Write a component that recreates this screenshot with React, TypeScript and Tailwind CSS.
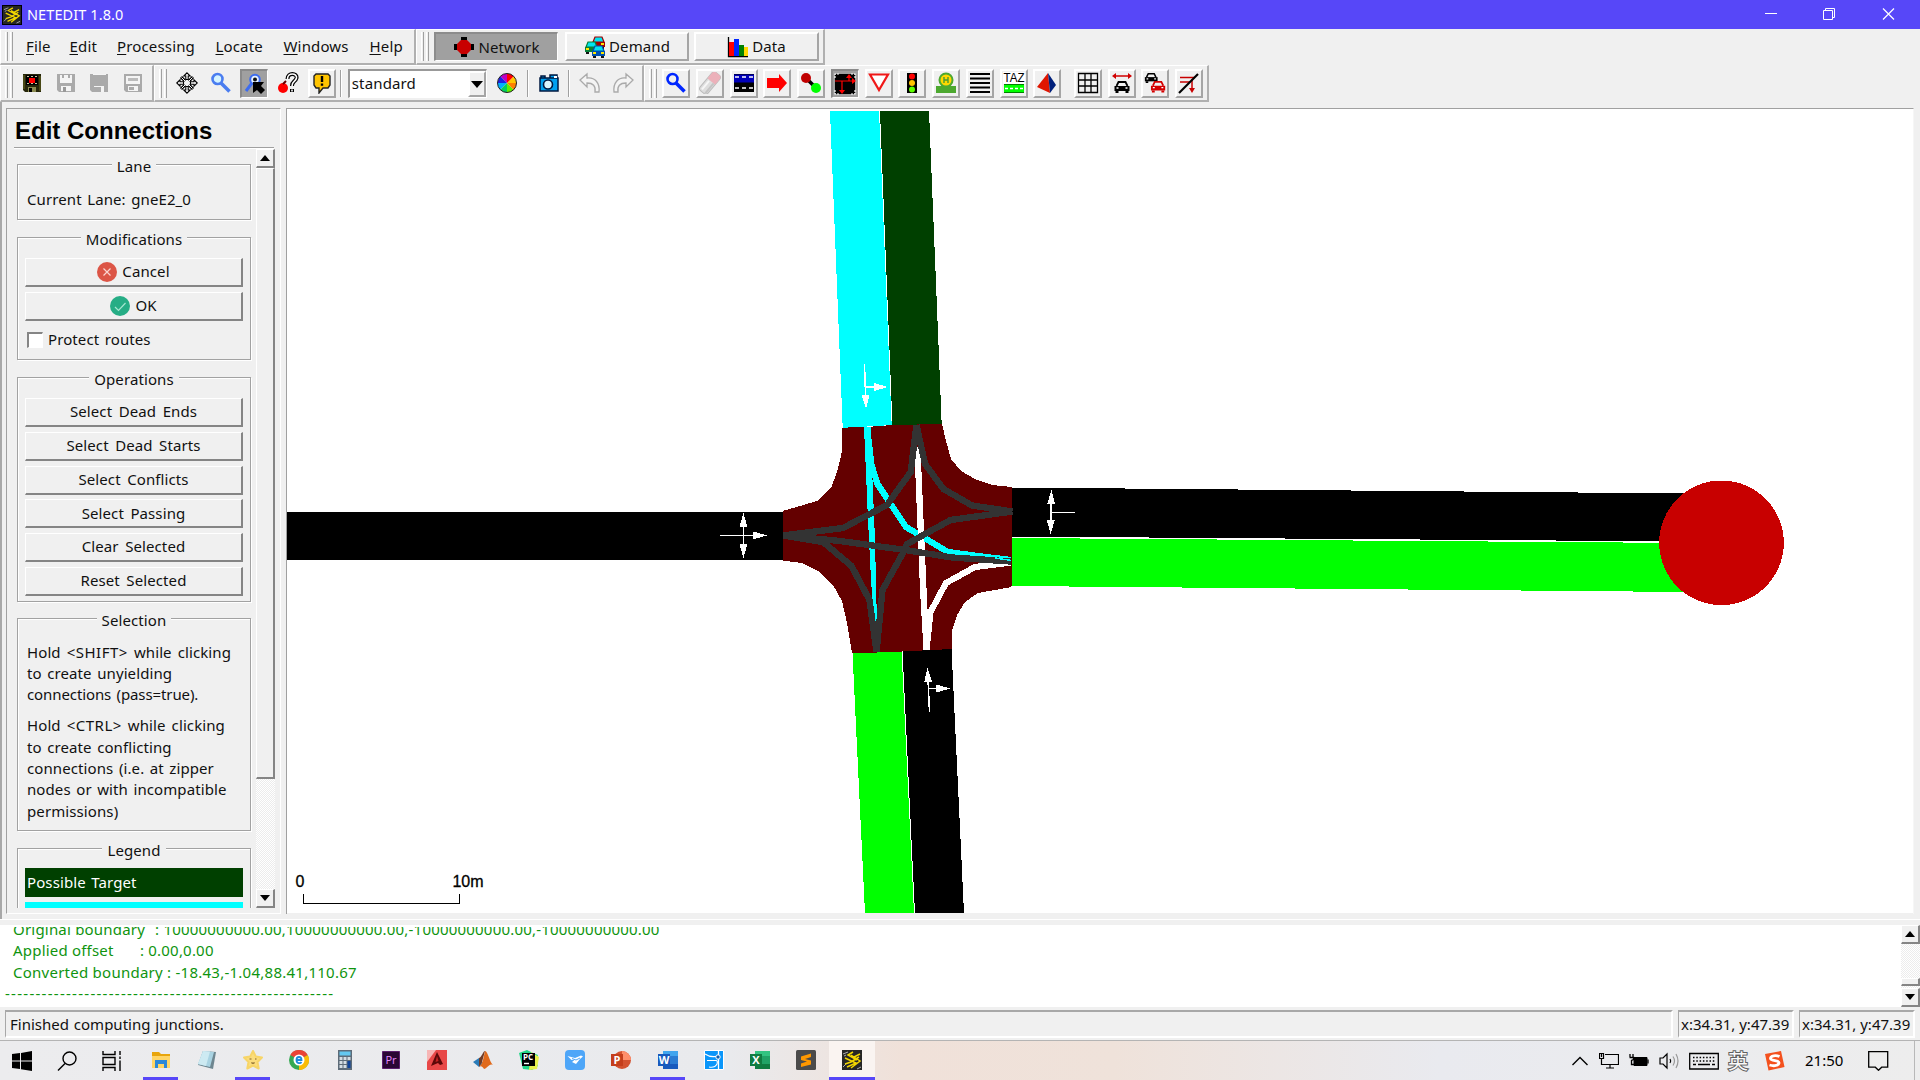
import { ReactNode } from "react"

const raised = "bg-[#f0f0f0] border-t-2 border-l-2 border-t-white border-l-white border-r-2 border-b-2 border-r-[#a5a5a5] border-b-[#a5a5a5]"
const panelButton = "flex items-center justify-center h-[29px] w-full shrink-0 bg-[#f0f0f0] border-t border-l border-t-white border-l-white border-r-2 border-b-2 border-r-[#858585] border-b-[#858585]"

function Svg({ children, w = 22, h = 22 }: { children: ReactNode; w?: number; h?: number }) {
  return (
    <svg width={w} height={h} viewBox={`0 0 ${w} ${h}`} className="shrink-0" fill="none">
      {children}
    </svg>
  )
}

function Grip() {
  return (
    <div className="flex gap-[2px] h-[29px] shrink-0">
      <div className="w-[3px] border-l border-white border-r border-r-[#a0a0a0]"></div>
      <div className="w-[3px] border-l border-white border-r border-r-[#a0a0a0]"></div>
    </div>
  )
}

function ToolButton({ children, pressed, flat }: { children: ReactNode; pressed?: boolean; flat?: boolean }) {
  const look = pressed
    ? "bg-[#a0a0a0] border-t-2 border-l-2 border-[#8a8a8a] border-r border-b border-r-white border-b-white"
    : flat
      ? ""
      : raised
  return <div className={`flex items-center justify-center w-[28px] h-[29px] shrink-0 ${look}`}>{children}</div>
}

function Separator() {
  return <div className="w-[2px] h-[27px] border-l border-[#a0a0a0] border-r border-r-white shrink-0"></div>
}

function Floppy({ color, inner }: { color: string; inner: ReactNode }) {
  return (
    <Svg>
      <path d="M2 2h18v18H4l-2-2z" fill={color} />
      {inner}
    </Svg>
  )
}

function Magnifier({ color, glass }: { color: string; glass: string }) {
  return (
    <Svg>
      <circle cx="7.5" cy="7" r="5" stroke={color} strokeWidth="2.6" fill={glass} />
      <path d="M11 11l8.500 8.500" stroke={color} strokeWidth="3.600" />
    </Svg>
  )
}

function Car({ x, y, color, fill = "none" }: { x: number; y: number; color: string; fill?: string }) {
  return (
    <g transform={`translate(${x} ${y})`}>
      <path d="M3 5L5 1h7l2 4" stroke={color} strokeWidth="1.800" fill={fill} />
      <path d="M1 5h15v5H1z" fill={color} />
      <path d="M2 10h3v2H2zM12 10h3v2h-3z" fill={color} />
      <path d="M3 7h2M12 7h2" stroke="#fff" strokeWidth="1.500" />
    </g>
  )
}

// small cyan car of the demand button
function DemandCar({ x, y, body }: { x: number; y: number; body: string }) {
  return (
    <g transform={`translate(${x} ${y})`}>
      <path d="M3 0h7l2 5H1z" fill="#00e5f0" stroke={body} strokeWidth="1.200" />
      <path d="M0 5h13v5H0z" fill={body} />
      <path d="M1 6h3v2H1zM9 6h3v2H9z" fill="#ffe600" />
      <path d="M1 10h3v2H1zM9 10h3v2H9z" fill="#111" />
    </g>
  )
}

const editModes: { name: string; icon: ReactNode; pressed?: boolean }[] = [
  { name: "inspect", icon: <Magnifier color="#0026ff" glass="#f0f0f0" /> },
  {
    name: "delete",
    icon: (
      <Svg>
        <g transform="rotate(-50 11 11)">
          <rect x="-1" y="6" width="24" height="10" rx="3" fill="#dedede" stroke="#bcbcbc" />
          <path d="M13 6h7a3 3 0 0 1 3 3v4a3 3 0 0 1-3 3h-7z" fill="#ecb1ba" />
          <path d="M0 14h13" stroke="#c4c4c4" strokeWidth="2" />
          <path d="M1 9h11" stroke="#f6f6f6" strokeWidth="2" />
        </g>
      </Svg>
    ),
  },
  {
    name: "edge",
    icon: (
      <Svg>
        <path d="M1 2h20v9H1z" fill="#0000b8" />
        <path d="M1 11h20v9H1z" fill="#000" />
        <path d="M1 2.500h20M1 10.500h20" stroke="#00005a" />
        <path d="M2 5h4M9 5h4M16 5h4" stroke="#fff" strokeWidth="1.300" />
        <path d="M2 16h4M9 16h4M16 16h4" stroke="#fff" strokeWidth="1.300" />
      </Svg>
    ),
  },
  { name: "move", icon: <Svg><path d="M1 6h12V2l8 9-8 9v-4H1z" fill="#f00" /></Svg> },
  {
    name: "junction",
    icon: (
      <Svg>
        <path d="M6 6l10 10" stroke="#000" strokeWidth="3.500" />
        <circle cx="6" cy="6" r="5" fill="#c00000" />
        <circle cx="16" cy="16" r="5" fill="#0f0" />
      </Svg>
    ),
  },
  {
    name: "connection",
    pressed: true,
    icon: (
      <Svg>
        <path d="M1 1h20v20H1z" fill="#000" />
        <path d="M1 5V1h4M17 1h4v4M1 17v4h4M17 21h4v-4" stroke="#fff" strokeWidth="1.200" strokeDasharray="2 1" />
        <path d="M1 8h18M8 8v11M15 8V3" stroke="#f00" strokeWidth="1.200" />
        <path d="M18 5l4 3-4 3zM5 17h6l-3 4zM12 5h6l-3-4z" fill="#f00" />
      </Svg>
    ),
  },
  { name: "prohibition", icon: <Svg><path d="M2 2.500h18L11 18z" fill="#fff" stroke="#f01818" strokeWidth="2.200" /></Svg> },
  {
    name: "tls",
    icon: (
      <Svg>
        <path d="M6 1h10v20H6z" fill="#000" />
        <circle cx="11" cy="4.500" r="3" fill="#f00" />
        <circle cx="11" cy="11" r="3" fill="#ffc400" />
        <circle cx="11" cy="17.500" r="3" fill="#5eff00" />
      </Svg>
    ),
  },
  {
    name: "additional",
    icon: (
      <Svg>
        <path d="M1 14h20v7H1z" fill="#4ca82f" />
        <circle cx="11" cy="8" r="7.500" fill="#4ca82f" />
        <circle cx="11" cy="8" r="5.500" fill="#ffd800" />
        <path d="M9 5v6M13 5v6M9 8h4" stroke="#4c9c2f" strokeWidth="1.400" />
      </Svg>
    ),
  },
  { name: "crossing", icon: <Svg><path d="M1 2h20M1 6.500h20M1 11h20M1 15.500h20M1 20h20" stroke="#000" strokeWidth="2" /></Svg> },
  {
    name: "taz",
    icon: (
      <Svg>
        <path d="M0 0h22v12H0z" fill="#fff" />
        <text x="0.500" y="10" fontSize="12" textLength="21" lengthAdjust="spacingAndGlyphs" fill="#000" fontFamily="Liberation Sans">TAZ</text>
        <path d="M1 12h20v9H1z" fill="#0f0" />
        <path d="M1 12.500h20M1 20.500h20" stroke="#008000" />
        <path d="M2 16.500h3M7 16.500h3M12 16.500h3M17 16.500h3" stroke="#fff" strokeWidth="1.400" />
      </Svg>
    ),
  },
  {
    name: "shape",
    icon: (
      <Svg>
        <path d="M12 1L1 15l13 6z" fill="#e01600" />
        <path d="M12 1l8 12-6 8z" fill="#00207c" />
      </Svg>
    ),
  },
]

const viewModes: { name: string; icon: ReactNode }[] = [
  { name: "grid", icon: <Svg><path d="M1.500 1.500h19v19h-19zM1.500 8h19M1.500 14h19M8 1.500v19M14 1.500v19" stroke="#000" strokeWidth="1.300" /></Svg> },
  {
    name: "spacing",
    icon: (
      <Svg>
        <path d="M3 4h16" stroke="#d00000" strokeWidth="1.500" />
        <path d="M1 4l4-3v6zM21 4l-4-3v6z" fill="#d00000" />
        <Car x={2.5} y={9} color="#000" />
      </Svg>
    ),
  },
  {
    name: "vehicles",
    icon: (
      <Svg>
        <g transform="scale(.85)"><Car x={0} y={1} color="#000" /></g>
        <g transform="translate(6 9) scale(.95)"><Car x={0} y={0} color="#d40000" fill="#f0f0f0" /></g>
      </Svg>
    ),
  },
  {
    name: "chain",
    icon: (
      <Svg>
        <path d="M2 5.500h15M2 10h10M14 7v12" stroke="#c80000" strokeWidth="1.500" />
        <path d="M11 16h6l-3 5z" fill="#c80000" />
        <path d="M1 21L20 2" stroke="#000" strokeWidth="2.200" />
      </Svg>
    ),
  },
]

function SumoLogo({ size }: { size: number }) {
  return (
    <svg width={size} height={size} viewBox="0 0 20 20" fill="none" className="shrink-0">
      <path d="M0 0h20v20H0z" fill="#262626" />
      <path d="M1 4l5-2M2 6l2-1M15 19l4-2M1 17l3-3" stroke="#b0b0b0" strokeWidth="1" />
      <path d="M11 2L6 5l9 5M3 8l11 5-9 4M18 4l-6 3M17 7L9 12l-6 2M9 5l9 6-9 7" stroke="#f3d600" strokeWidth="1.500" />
    </svg>
  )
}

function TitleBar() {
  return (
    <div className="h-[29px] shrink-0 bg-[#5747f8] flex items-center text-white">
      <div className="ml-[2px] w-[20px] h-[20px] border border-black"><SumoLogo size={18} /></div>
      <span className="ml-[5px] text-[14.500px] tracking-[0.100px]">NETEDIT 1.8.0</span>
      <div className="ml-auto flex items-center">
        <Svg w={58} h={29}><path d="M23 13.500h12" stroke="#fff" /></Svg>
        <Svg w={59} h={29}><path d="M23.500 10.500h9v9h-9zM25.500 10v-1.500h9v9H33" stroke="#fff" /></Svg>
        <Svg w={61} h={29}><path d="M24 8.500l11 11M35 8.500l-11 11" stroke="#fff" strokeWidth="1.200" /></Svg>
      </div>
    </div>
  )
}

const menus = [
  { label: "File", width: "w-[43.500px]" },
  { label: "Edit", width: "w-[47.500px]" },
  { label: "Processing", width: "w-[98.500px]" },
  { label: "Locate", width: "w-[68px]" },
  { label: "Windows", width: "w-[86px]" },
  { label: "Help", width: "w-[44px]" },
]

const bar = "flex items-center h-full border-t border-l border-t-white border-l-white border-r-2 border-b-2 border-r-[#b0b0b0] border-b-[#b0b0b0]"

function MenuRow() {
  return (
    <div className="h-[36px] shrink-0 flex">
      <div className={`${bar} w-[416px] pl-[4px]`}>
        <Grip />
        <div className="flex ml-[13px] text-[15px] tracking-[0.150px]">
          {menus.map((m) => (
            <div key={m.label} className={m.width}>
              <span className="underline underline-offset-2">{m.label[0]}</span>
              {m.label.slice(1)}
            </div>
          ))}
        </div>
      </div>
      <div className={`${bar} w-[409px] pl-[4px] text-[15px] tracking-[0.100px]`}>
        <Grip />
        <div className="ml-[5px] w-[124px] h-[29px] flex items-center justify-center bg-[#a0a0a0] border-t-2 border-l-2 border-[#8c8c8c] border-r border-b border-r-white border-b-white">
          <Svg>
            <path d="M8 1h6v20H8zM1 8h20v6H1z" fill="#000" />
            <path d="M8 4h6l4 4v6l-4 4H8l-4-4V8z" fill="#c80000" />
          </Svg>
          <span className="ml-[3px]">Network</span>
        </div>
        <div className={`ml-[7px] w-[124px] h-[29px] flex items-center justify-center ${raised}`}>
          <Svg>
            <DemandCar x={8} y={1} body="#a00000" />
            <DemandCar x={1} y={6} body="#078038" />
            <DemandCar x={8} y={10} body="#0050b0" />
          </Svg>
          <span className="ml-[3px]">Demand</span>
        </div>
        <div className={`ml-[5px] w-[125px] h-[29px] flex items-center justify-center ${raised}`}>
          <Svg>
            <path d="M1.500 1v19.500H21" stroke="#000" strokeWidth="1.300" />
            <path d="M2 6h5v14H2z" fill="#f00" />
            <path d="M7 3h5v17H7z" fill="#0026ff" />
            <path d="M12 9h5v11h-5z" fill="#008000" />
            <path d="M17 11h4v9h-4z" fill="#ffd800" />
          </Svg>
          <span className="ml-[3px]">Data</span>
        </div>
      </div>
    </div>
  )
}

function ColorWheel() {
  const colors = ["#ffc800", "#f00", "#c000c0", "#2020e0", "#00b0ff", "#00d060", "#60f000", "#ff8000"]
  return (
    <Svg>
      {colors.map((c, i) => (
        <path key={c} d="M11 11V1.500A9.500 9.500 0 0 1 17.700 4.300z" fill={c} transform={`rotate(${-i * 45 + 45} 11 11)`} />
      ))}
      <circle cx="11" cy="11" r="9.500" stroke="#222" strokeWidth="1" />
    </Svg>
  )
}

function ToolRow() {
  return (
    <div className="h-[37px] shrink-0 flex">
      <div className={`${bar} w-[154px] pl-[4px]`}>
        <Grip />
        <div className="flex ml-[5px] gap-[5.700px]">
          <ToolButton flat>
            <Floppy color="#26260a" inner={<><path d="M5 3h12v10H5z" fill="#000" /><path d="M6 4.500h10M6 11.500h10" stroke="#c8c8a0" strokeWidth="1" strokeDasharray="2 2" /><path d="M8 6h6v5H8z" fill="#f00" /><path d="M7 15h8v5H7z" fill="#8a8a50" /><path d="M8 16h3v4H8z" fill="#000" /><path d="M3 3v14M19 4v15" stroke="#6b6b20" strokeWidth="1" /></>} />
          </ToolButton>
          <ToolButton flat>
            <Floppy color="#aaa" inner={<><path d="M5 3h2v3h2V3h4v3h2V3h2v8H5zM6 14h10v5H6z" fill="#f4f4f4" /><path d="M8 15h3v5H8z" fill="#999" /></>} />
          </ToolButton>
          <ToolButton flat>
            <Floppy color="#aaa" inner={<><path d="M5 2h13v1H5zM6 14h10v6H6z" fill="#f4f4f4" /><path d="M6 15h7v5H6z" fill="#aaa" /></>} />
          </ToolButton>
          <ToolButton flat>
            <Floppy color="#aaa" inner={<><path d="M4 4h14v8H4zM6 14h10v5H6z" fill="#f4f4f4" /><path d="M6 6h10v3H6z" fill="#bbb" /><path d="M7 15h5v3H7z" fill="#aaa" /></>} />
          </ToolButton>
        </div>
      </div>
      <div className={`${bar} w-[490px] pl-[4px]`}>
        <Grip />
        <div className="flex ml-[6px] gap-[5.700px]">
          <ToolButton flat>
            <Svg>
              <path d="M11 .800l3.200 3.200h-2v3.500h-2.400V4h-2zM11 21.200l3.200-3.200h-2v-3.500h-2.400V18h-2zM.800 11L4 7.800v2h3.500v2.400H4v2zM21.200 11L18 7.800v2h-3.500v2.400H18v2z" fill="#fff" stroke="#000" strokeWidth="1.100" />
              <path d="M9 9L5 5M13 9l4-4M9 13l-4 4M13 13l4 4" stroke="#000" strokeWidth="3" />
              <path d="M9 9L5.500 5.500M13 9l3.500-3.500M9 13l-3.500 3.500M13 13l3.500 3.500" stroke="#fff" strokeWidth="1" />
            </Svg>
          </ToolButton>
          <ToolButton flat><Magnifier color="#4a7df0" glass="#d5f4ff" /></ToolButton>
          <ToolButton pressed>
            <Svg>
              <path d="M8 10l-6 8" stroke="#3c6cf0" strokeWidth="3" />
              <circle cx="11" cy="6.500" r="4.800" fill="#e6f2ff" stroke="#3c6cf0" strokeWidth="2" />
              <circle cx="11" cy="6.500" r="2" fill="#111" />
              <path d="M9 9h11l-3 4 4 4-4 4-4-4-4 3z" fill="#000" />
            </Svg>
          </ToolButton>
          <ToolButton flat>
            <Svg>
              <circle cx="6" cy="16" r="5" fill="#f00" />
              <path d="M6 12l3-3" stroke="#600" strokeWidth="2" />
              <path d="M10.500 7c0-7 10-6 9-1-1 4-4.500 3-4.500 8M15 17v3" stroke="#000" strokeWidth="4" />
              <path d="M10.500 7c0-7 10-6 9-1-1 4-4.500 3-4.500 8M15 17.500v2" stroke="#fff" strokeWidth="1.600" />
            </Svg>
          </ToolButton>
          <ToolButton>
            <Svg>
              <path d="M5 2h12l2 2v9l-2 3h-5l-4 5v-5H5l-2-3V4z" fill="#ffc400" stroke="#222" strokeWidth="1.400" />
              <path d="M11 4v6M11 11.500v2.200" stroke="#000" strokeWidth="2.400" />
            </Svg>
          </ToolButton>
        </div>
        <div className="ml-[4px]"><Separator /></div>
        <div className="ml-[6px] w-[139px] h-[29px] bg-white border-t-2 border-l-2 border-[#999] border-r border-b border-r-white border-b-white flex items-center text-[15px]">
          <span className="ml-[2px] tracking-[0.150px]">standard</span>
          <div className={`ml-auto w-[18px] h-full flex items-center justify-center ${raised}`}>
            <Svg w={12} h={8}><path d="M0 1h12L6 8z" fill="#000" /></Svg>
          </div>
        </div>
        <div className="ml-[6px]"><ToolButton flat><ColorWheel /></ToolButton></div>
        <div className="ml-[6px]"><Separator /></div>
        <div className="ml-[6px]">
          <ToolButton flat>
            <Svg>
              <path d="M2 6h18v13H2zM12 3h7v3h-7zM3 4h4v2H3z" fill="#00a0f0" stroke="#001840" strokeWidth="1.500" />
              <circle cx="10" cy="12.500" r="4.500" fill="#d8f4ff" stroke="#001840" strokeWidth="1.600" />
              <path d="M16 4h3v2h-3z" fill="#fff" />
            </Svg>
          </ToolButton>
        </div>
        <div className="ml-[5px]"><Separator /></div>
        <div className="ml-[6px] flex gap-[5px]">
          <ToolButton flat>
            <Svg><path d="M1 8l7-6v4c8-1 13 5 12 14h-4c1-6-2-9-8-9v4z" fill="#f4f4f4" stroke="#aaa" strokeWidth="1.300" /></Svg>
          </ToolButton>
          <ToolButton flat>
            <Svg><path d="M21 8l-7-6v4C6 5 1 11 2 20h4c-1-6 2-9 8-9v4z" fill="#f4f4f4" stroke="#aaa" strokeWidth="1.300" /></Svg>
          </ToolButton>
        </div>
      </div>
      <div className={`${bar} w-[565px] pl-[4px]`}>
        <Grip />
        <div className="flex ml-[5px] gap-[5.750px]">
          {editModes.map((m) => (
            <ToolButton key={m.name} pressed={m.pressed}>{m.icon}</ToolButton>
          ))}
        </div>
        <div className="flex ml-[12.500px] gap-[5.750px]">
          {viewModes.map((m) => (
            <ToolButton key={m.name}>{m.icon}</ToolButton>
          ))}
        </div>
      </div>
    </div>
  )
}

function Group({ title, size, gap, children }: { title: string; size: string; gap: string; children: ReactNode }) {
  return (
    <div className={`${size} ${gap} shrink-0 w-[234px] flex flex-col px-[7px] border border-[#a2a2a2] shadow-[1px_1px_0_#fff,inset_1px_1px_0_#fff]`}>
      <div className="-mt-[9px] mb-[2px] h-[20px] leading-[20px] px-[5px] mx-auto bg-[#f0f0f0] shrink-0">{title}</div>
      {children}
    </div>
  )
}

const operations = ["Select Dead Ends", "Select Dead Starts", "Select Conflicts", "Select Passing", "Clear Selected", "Reset Selected"]
const ctrlHelp = ["to create conflicting", "connections (i.e. at zipper", "nodes or with incompatible", "permissions)"]

const track = "bg-[repeating-conic-gradient(#ffffff_0_25%,#ececec_0_50%)] bg-[length:2px_2px]"
const scrollPart = "bg-[#f0f0f0] flex items-center justify-center shrink-0 border-t border-l border-t-white border-l-white border-r-2 border-b-2 border-r-[#858585] border-b-[#858585]"

function SidePanel() {
  return (
    <div className="w-[275px] shrink-0 h-full border-t border-l border-[#a0a0a0] border-r border-r-white border-b border-b-white flex flex-col">
      <div className="h-[39px] shrink-0 ml-[7px] mr-[6px] border-b border-[#a0a0a0] shadow-[0_1px_0_#fff]">
        <h1 className="ml-[1px] mt-[8px] leading-[28px] font-bold text-[24px] text-black whitespace-nowrap font-['Liberation_Sans',sans-serif]">Edit Connections</h1>
      </div>
      <div className="mt-[1px] ml-[10px] h-[759px] flex overflow-hidden text-[15px] tracking-[0.100px] [word-spacing:1.500px]">
        <div className="w-[239px] h-full overflow-hidden flex flex-col pt-[15px]">
          <Group title="Lane" size="h-[56px]" gap="mb-[17px]">
            <div className="mt-[11px] ml-[2px] leading-[20px] whitespace-nowrap">Current Lane: gneE2_0</div>
          </Group>
          <Group title="Modifications" size="h-[123px]" gap="mb-[17px]">
            <div className="mt-[7px] flex flex-col gap-[5px]">
              <button className={panelButton}>
                <Svg w={20} h={20}>
                  <circle cx="10" cy="10" r="10" fill="#dc5546" />
                  <path d="M6.500 6.500l7 7M13.500 6.500l-7 7" stroke="#fbd5d0" strokeWidth="1.200" />
                </Svg>
                <span className="ml-[5px] pb-px">Cancel</span>
              </button>
              <button className={panelButton}>
                <Svg w={20} h={20}>
                  <circle cx="10" cy="10" r="10" fill="#26ad85" />
                  <path d="M5 11l3.500 3.500L15.500 7" stroke="#a6e6d0" strokeWidth="1.200" />
                </Svg>
                <span className="ml-[5px] pb-px">OK</span>
              </button>
            </div>
            <label className="flex items-center mt-[8px] ml-[2px] h-[22px]">
              <span className="w-[16px] h-[16px] bg-white border-t-2 border-l-2 border-[#858585] border-r border-b border-r-white border-b-white"></span>
              <span className="ml-[5px] pb-[2px]">Protect routes</span>
            </label>
          </Group>
          <Group title="Operations" size="h-[225px]" gap="mb-[16px]">
            <div className="mt-[7px] h-[198px] flex flex-col justify-between">
              {operations.map((o) => (
                <button key={o} className={`${panelButton} pb-px [word-spacing:2.500px]`}>{o}</button>
              ))}
            </div>
          </Group>
          <Group title="Selection" size="h-[213px]" gap="mb-[17px]">
            <div className="ml-[2px] mt-[9.500px] leading-[21.300px] whitespace-nowrap">
              <div className="[word-spacing:2px]">Hold <span className="tracking-[0.500px]">&lt;SHIFT&gt;</span> while clicking</div>
              <div>to create unyielding</div>
              <div className="tracking-[-0.100px]">connections (pass=true).</div>
            </div>
            <div className="ml-[2px] mt-[10px] leading-[21.300px] whitespace-nowrap">
              <div className="[word-spacing:2px]">Hold <span className="tracking-[0.500px]">&lt;CTRL&gt;</span> while clicking</div>
              {ctrlHelp.map((l) => <div key={l}>{l}</div>)}
            </div>
          </Group>
          <Group title="Legend" size="h-[160px]" gap="mb-0">
            <div className="mt-[6px] h-[29px] shrink-0 bg-[#004000] text-white leading-[28px] pl-[2px]">Possible Target</div>
            <div className="mt-[5px] h-[29px] shrink-0 bg-[#00ffff]"></div>
          </Group>
        </div>
        <div className={`w-[19px] h-full flex flex-col ${track}`}>
          <div className={`${scrollPart} h-[19px]`}><Svg w={10} h={6}><path d="M0 6L5 0l5 6z" fill="#000" /></Svg></div>
          <div className={`${scrollPart} h-[611px]`}></div>
          <div className={`${scrollPart} h-[19px] mt-auto`}><Svg w={10} h={6}><path d="M0 0h10L5 6z" fill="#000" /></Svg></div>
        </div>
      </div>
    </div>
  )
}

// turn arrows painted on a lane, origin in the crossing of both strokes
function Arrow({ x1, y1, x2, y2 }: { x1: number; y1: number; x2: number; y2: number }) {
  const len = Math.hypot(x2 - x1, y2 - y1)
  const ux = (x2 - x1) / len
  const uy = (y2 - y1) / len
  const bx = x2 - ux * 14
  const by = y2 - uy * 14
  return (
    <g stroke="none" fill="#fff">
      <line x1={x1} y1={y1} x2={bx} y2={by} stroke="#fff" strokeWidth="1.500" />
      <polygon points={`${x2},${y2} ${bx - uy * 4},${by + ux * 4} ${bx + uy * 4},${by - ux * 4}`} />
    </g>
  )
}

const darkLinks = [
  "916.500,425 910.700,472 887,505 843,528 783,535.500",
  "916.500,425 925,464 943.500,489 972,505.500 1012.500,511.500",
  "1012.500,511.500 950.500,520 907,544 904,551 882.500,590 876.500,652",
  "783,535.500 840,541 905,550 952,557.500 1011,561.500",
  "783,535.500 823,542 851.500,566 869.500,600 876.500,652",
]

function NetworkView() {
  return (
    <svg viewBox="287 109 1626 804" width={1626} height={804} className="bg-white block" fill="none" shapeRendering="crispEdges">
      <polygon points="287,511.500 783,511.500 783,560 287,560" fill="#000" />
      <polygon points="830,111 879,111 891.700,425 842.700,428" fill="#0ff" />
      <polygon points="880,111 929,111 941.700,424 892.500,425.500" fill="#004000" />
      <polygon points="852.500,653 901.500,651 914,913 865,913" fill="#0f0" />
      <polygon points="902.500,651 951.500,649 964,913 915,913" fill="#000" />
      <polygon points="1012,487.500 1690,493.500 1690,541.500 1012,536.500" fill="#000" />
      <polygon points="1011.500,538 1690,543 1690,592 1011.500,586" fill="#0f0" />
      <polygon
        points="841.700,427.700 866,427 892,425 942,424 946,441 951,459 961,471 975,479 992,485 1012.500,487 1011.500,587 978,593 965,602 957,615 952.500,629 952,649 902,651.500 852,653.500 847,623 842,601 833,585 818,571 802,563 782.700,560.500 782.700,511 817,501 831,488 837,472 841.500,454"
        fill="#640000"
      />
      <polyline points="867,427 871.500,465 877.500,484 906,527 948,552 978,556 1011,560" stroke="#0ff" strokeWidth="6.200" />
      <polygon points="864,427 870.500,427 872.500,480 875,540 877,625 874.500,625 871,580 868,520" fill="#0ff" />
      <polygon points="923.500,650 930,650 927,600 921,460 918,447 916.500,447 915,465 920,590" fill="#fff" />
      <polyline points="926.500,650 930.500,612 946,583 975,567 1011,562.500" stroke="#fff" strokeWidth="6.200" />
      {darkLinks.map((p) => (
        <polyline key={p} points={p} stroke="#333" strokeWidth="6.400" />
      ))}
      <path d="M995 558l16.500 2.500" stroke="#0ff" strokeWidth="1.500" />
      <circle cx="1721.500" cy="542.800" r="62.300" fill="#c80000" />
      <Arrow x1={720} y1={535.500} x2={767} y2={535.500} />
      <Arrow x1={743.500} y1={535.500} x2={743.500} y2={513} />
      <Arrow x1={743.500} y1={535.500} x2={743.500} y2={558} />
      <Arrow x1={1051} y1={512} x2={1051.500} y2={490} />
      <Arrow x1={1051} y1={512} x2={1050.500} y2={534} />
      <path d="M1051 512.500h24" stroke="#fff" strokeWidth="1.300" />
      <Arrow x1={864.500} y1={364} x2={866} y2={409} />
      <Arrow x1={865.500} y1={387} x2={888} y2={387} />
      <Arrow x1={929.500} y1={712} x2={927.500} y2={668} />
      <Arrow x1={929} y1={688.500} x2={950} y2={688.500} />
      <path d="M303.500 894v9.500h156V894" stroke="#000" strokeWidth="1.500" />
      <g fontFamily="Liberation Sans" fontSize="16" fill="#000" stroke="#000" strokeWidth="0.300">
        <text x="295.500" y="887">0</text>
        <text x="452.500" y="887" textLength="31">10m</text>
      </g>
    </svg>
  )
}

function Console() {
  return (
    <div className="h-[82px] shrink-0 flex bg-white overflow-hidden text-[15px] text-[#0f940f]">
      <div className="flex-1 pt-[2px] overflow-hidden">
        <div className="h-[79px] overflow-hidden whitespace-pre leading-[21.300px]">
          <div className="-mt-[8px] ml-[13px] tracking-[0.200px]"><span className="inline-block w-[138px]">Original boundary</span><span>{" : 10000000000.00,10000000000.00,-10000000000.00,-10000000000.00"}</span></div>
          <div className="ml-[13px] tracking-[0.200px]"><span className="inline-block w-[127px]">Applied offset</span>: 0.00,0.00</div>
          <div className="ml-[13px] tracking-[0.250px]">Converted boundary : -18.43,-1.04,88.41,110.67</div>
          <div className="ml-[5px] tracking-[1.270px]">------------------------------------------------------</div>
        </div>
      </div>
      <div className={`w-[19px] flex flex-col ${track}`}>
        <div className={`${scrollPart} h-[19px]`}><Svg w={10} h={6}><path d="M0 6L5 0l5 6z" fill="#000" /></Svg></div>
        <div className={`${scrollPart} h-[8px] mt-auto`}></div>
        <div className={`${scrollPart} h-[19px] mt-[2px]`}><Svg w={10} h={6}><path d="M0 0h10L5 6z" fill="#000" /></Svg></div>
      </div>
    </div>
  )
}

const sunken = "h-[28px] flex items-center border-t-2 border-l border-[#a8a8a8] border-r-2 border-b-2 border-r-white border-b-white whitespace-nowrap"

function StatusBar() {
  return (
    <div className="h-[34px] shrink-0 flex pt-[3px] pl-[5px] pr-[5px] gap-[5px] text-[15px] border-b border-[#b4b4b4]">
      <div className={`${sunken} flex-1 pl-[4px] [word-spacing:1px]`}>Finished computing junctions.</div>
      <div className={`${sunken} w-[116px] pl-[2px]`}>x:34.31, y:47.39</div>
      <div className={`${sunken} w-[116px] pl-[2px]`}>x:34.31, y:47.39</div>
    </div>
  )
}

function OfficeIcon({ letter, dark, mid, light }: { letter: string; dark: string; mid: string; light: string }) {
  return (
    <Svg w={20} h={20}>
      <path d="M5 1h15v18H5z" fill={mid} />
      <path d="M5 1h15v5H5z" fill={light} />
      <path d="M5 14h15v5H5z" fill={dark} />
      <path d="M0 4h12v12H0z" fill={dark} />
      <text x="6" y="14" fontSize="11" fontWeight="700" textAnchor="middle" fill="#fff" fontFamily="Open Sans">{letter}</text>
    </Svg>
  )
}

const apps: { name: string; icon: ReactNode; open?: boolean; active?: boolean }[] = [
  {
    name: "explorer",
    open: true,
    icon: (
      <Svg w={20} h={20}>
        <path d="M1 2h7l2 2h9v14H1z" fill="#e8a50c" />
        <path d="M1 6h18v12H1z" fill="#ffd566" />
        <path d="M4 18v-8h12v8h-3v-4H7v4z" fill="#2b88d8" />
      </Svg>
    ),
  },
  {
    name: "notepad",
    icon: (
      <Svg w={20} h={20}>
        <path d="M6 1l13 1-3 17-15-4z" fill="#6e8690" />
        <path d="M6 1l11 1-4 15-12-3z" fill="#a9d3e2" />
        <path d="M6 1l7 .600-4 14.400-8-2z" fill="#cdeaf2" />
      </Svg>
    ),
  },
  {
    name: "star",
    open: true,
    icon: (
      <Svg w={20} h={20}>
        <path d="M10 1l2.800 5.500 6.200 1-4.500 4.500 1.200 6.500L10 15.500 4.300 18.500 5.500 12 1 7.500l6.200-1z" fill="#fbdd7c" stroke="#f7d568" strokeWidth="2" strokeLinejoin="round" />
        <path d="M6.500 9h2M12 9h1.500M8.500 12.500q1.500 1.500 3 0" stroke="#80602a" strokeWidth="1.100" />
      </Svg>
    ),
  },
  {
    name: "chrome",
    icon: (
      <Svg w={20} h={20}>
        <circle cx="10" cy="10" r="10" fill="#34a853" />
        <path d="M10 10L1.300 5A10 10 0 0 1 18.700 5z" fill="#ea4335" />
        <path d="M10 10l8.700-5A10 10 0 0 1 10 20z" fill="#fbbc05" />
        <circle cx="10" cy="10" r="5.500" fill="#fff" />
        <path d="M7.500 10h5c0-4-5-4-5 0s4 3.500 5 2" stroke="#1c8adb" strokeWidth="1.800" />
      </Svg>
    ),
  },
  {
    name: "calculator",
    icon: (
      <Svg w={20} h={20}>
        <path d="M3 0h14v20H3z" fill="#5d6b78" />
        <path d="M4.500 1.500h11v4h-11z" fill="#64c8f0" />
        <path d="M4.500 7h3v3h-3zM8.500 7h3v3h-3zM12.500 7h3v3h-3zM4.500 11h3v3h-3zM8.500 11h3v3h-3zM4.500 15h3v3h-3zM8.500 15h3v3h-3z" fill="#d5dde3" />
        <path d="M12.500 11h3v7h-3z" fill="#10449a" />
      </Svg>
    ),
  },
  {
    name: "premiere",
    icon: (
      <Svg w={20} h={20}>
        <path d="M1.500 1.500h17v17h-17z" fill="#2a0634" stroke="#5b1e6d" />
        <text x="10" y="14" fontSize="11" textAnchor="middle" fill="#e58aff" fontFamily="Open Sans">Pr</text>
      </Svg>
    ),
  },
  {
    name: "autocad",
    icon: (
      <Svg w={20} h={20}>
        <path d="M0 0h20v20H0z" fill="#e84848" />
        <path d="M0 0h9L0 12z" fill="#f7b5b5" />
        <path d="M10 2l6 12-3 1-2-2-7 3z" fill="#5c0808" />
        <path d="M10 6l1.500 5-3 1z" fill="#c02020" />
      </Svg>
    ),
  },
  {
    name: "matlab",
    icon: (
      <Svg w={20} h={20}>
        <path d="M0 12l6-4 4 5-4 4z" fill="#2a7bb8" />
        <path d="M6 8c3-1 4-7 6-7l-3 11-3 5z" fill="#703c28" />
        <path d="M12 1c3 0 4 10 8 14-4-2-6 4-9 4-1-2-3-4-5-2 4-3 5-12 6-16z" fill="#e06a1c" />
      </Svg>
    ),
  },
  {
    name: "pycharm",
    icon: (
      <Svg w={20} h={20}>
        <path d="M0 3l8-3 6 3 5 2-2 5 2 6-6 4-9-1z" fill="#21d789" />
        <path d="M12 2l8 5-2 12-8 1z" fill="#e8f04c" />
        <path d="M3 3h13v13H3z" fill="#000" />
        <text x="4" y="10" fontSize="8" fontWeight="700" fill="#fff" fontFamily="Open Sans">PC</text>
        <path d="M5 13.500h5" stroke="#fff" strokeWidth="1.400" />
      </Svg>
    ),
  },
  {
    name: "bird",
    icon: (
      <Svg w={20} h={20}>
        <rect width="20" height="20" rx="4" fill="#4ea6f8" />
        <path d="M2.500 6l7.500 2 6-2.500 2 1-3 2.500-4 5-4-2 3-2.500-3.500.500z" fill="#fff" />
        <path d="M7 8.500l4 1.500 4-2" stroke="#4ea6f8" strokeWidth="1" />
      </Svg>
    ),
  },
  {
    name: "powerpoint",
    icon: (
      <Svg w={20} h={20}>
        <circle cx="11" cy="10" r="9" fill="#d35230" />
        <path d="M11 1a9 9 0 0 1 9 9h-9z" fill="#ff8f6b" />
        <path d="M0 4h12v12H0z" fill="#c43e1c" />
        <text x="6" y="14" fontSize="11" fontWeight="700" textAnchor="middle" fill="#fff" fontFamily="Open Sans">P</text>
      </Svg>
    ),
  },
  { name: "word", open: true, icon: <OfficeIcon letter="W" dark="#185abd" mid="#2b7cd3" light="#41a5ee" /> },
  {
    name: "simulator",
    icon: (
      <Svg w={20} h={20}>
        <path d="M.500.500h19v19H.500z" fill="#0a96fa" stroke="#fff" />
        <path d="M1 4q6 4 13 2M3 10.500h9q2 0 1 3.500-2 4-8 3" stroke="#fff" strokeWidth="1.100" />
        <path d="M14.500 1v18" stroke="#fff" strokeWidth="1.300" />
        <circle cx="14" cy="7" r="2.200" fill="#0a5cb0" stroke="#fff" />
      </Svg>
    ),
  },
  { name: "excel", icon: <OfficeIcon letter="X" dark="#107c41" mid="#21a366" light="#33c481" /> },
  {
    name: "sublime",
    icon: (
      <Svg w={20} h={20}>
        <rect width="20" height="20" rx="1.500" fill="#4b4b4b" />
        <path d="M15 3.500v3.500l-6 2 6 1.500v4L5 17v-3.500l6-2L5 10V6.500z" fill="#ff9800" />
      </Svg>
    ),
  },
  { name: "netedit", active: true, icon: <SumoLogo size={20} /> },
]

function Taskbar() {
  return (
    <div className="flex-1 flex items-stretch pr-[5px] bg-[linear-gradient(90deg,#ececee_0%,#e9eaed_38%,#f0e1d9_47%,#efe2da_58%,#e9eaef_75%,#ededed_100%)]">
      <div className="w-[44.500px] flex items-center justify-center">
        <Svg w={20} h={20}><path d="M0 3l8-1v7.500H0zM9 2l11-2v9.500H9zM0 10.500h8V18l-8-1zM9 10.500h11V20L9 18.300z" fill="#000" /></Svg>
      </div>
      <div className="w-[44.500px] flex items-center justify-center">
        <Svg w={20} h={20}><circle cx="12.500" cy="7.500" r="6.500" stroke="#000" strokeWidth="1.400" /><path d="M8 12.500L1 19.500" stroke="#000" strokeWidth="1.400" /></Svg>
      </div>
      <div className="w-[48.500px] flex items-center justify-center pr-[2px]">
        <Svg w={20} h={20}><path d="M1 0v3.500h12V0M1 6.500h12v7H1zM1 20v-3.500h12V20M18 0v4M18 9.500V20M18 5.500v2.500" stroke="#000" strokeWidth="1.400" /></Svg>
      </div>
      {apps.map((a) => (
        <div key={a.name} className={`w-[46.100px] flex flex-col items-center ${a.active ? "bg-[#faf4f1]" : ""}`}>
          <div className="flex-1 flex items-center pt-[2px]">{a.icon}</div>
          <div className={`h-[3px] ${a.active ? "w-full bg-[#5747f8]" : a.open ? "w-[35px] bg-[#5747f8]" : "w-[35px]"}`}></div>
        </div>
      ))}
      <div className="ml-auto flex items-center border-r border-[#b8b8b8] pr-[25px]">
        <Svg w={16} h={20}><path d="M.500 14L8 6.500l7.500 7.500" stroke="#000" strokeWidth="1.400" /></Svg>
        <div className="ml-[11px]">
          <Svg w={20} h={20}><path d="M6 3.500h13.500v10H2.500V8M11 14v3M7 17h8M.500 2.500h4v5h-4zM2.500 3v3" stroke="#000" strokeWidth="1.200" /></Svg>
        </div>
        <div className="ml-[10px]">
          <Svg w={20} h={20}><path d="M5 6.500h13v8H5z" fill="#000" stroke="#000" /><path d="M19 8.500v4M1 3v3M4 3v3M.500 6.500h4v2l-2 1v4H5" stroke="#000" strokeWidth="1.300" /></Svg>
        </div>
        <div className="ml-[10px]">
          <Svg w={21} h={20}><path d="M1 7h3l4-4v14l-4-4H1z" stroke="#000" strokeWidth="1.200" /><path d="M11 8q1.500 2 0 4" stroke="#000" strokeWidth="1.200" /><path d="M14 5.500q3 4.500 0 9M17 3q4 7 0 14" stroke="#999" strokeWidth="1.200" /></Svg>
        </div>
        <div className="ml-[9px]">
          <Svg w={30} h={18}><path d="M.700 1.500h28.600v15.500H.700z" stroke="#000" strokeWidth="1.300" /><path d="M4 5.500h22M4 9h22" stroke="#000" strokeWidth="1.300" strokeDasharray="1.500 1.800" /><path d="M4 12.500h3M9 12.500h12M23 12.500h3" stroke="#000" strokeWidth="1.300" /></Svg>
        </div>
        <span className="ml-[9px] w-[21px] text-[20px] leading-[20px] text-[#fafafa] [-webkit-text-stroke:2px_#606060] [paint-order:stroke_fill] font-['Noto_Sans_CJK_SC',sans-serif]">英</span>
        <div className="ml-[15px]">
          <Svg w={21} h={20}><path d="M1 3l16-3 3.500 16-16 3.500z" fill="#f4511e" /><path d="M15.500 5.500C12 4 6.500 4.500 6.500 7.500c.500 3 9 1.500 8.500 4.500-1 3.500-6.500 3-9.500 2" stroke="#fff" strokeWidth="2.800" /></Svg>
        </div>
        <span className="ml-[20px] w-[43px] text-[15px] text-black">21:50</span>
        <div className="ml-[20px]">
          <Svg w={21} h={20}><path d="M.700.700h19v15.500h-6L10.500 19.300l-3.200-3.100H.700z" stroke="#000" strokeWidth="1.300" /></Svg>
        </div>
      </div>
    </div>
  )
}

export default function App() {
  return (
    <div className="w-[1920px] h-[1080px] flex flex-col overflow-hidden bg-[#f0f0f0] text-[#111] font-['Noto_Sans','Noto_Sans_CJK_SC',sans-serif]">
      <TitleBar />
      <MenuRow />
      <ToolRow />
      <div className="h-[817px] shrink-0 flex pt-[6px] pl-[4px] pb-[5px] border-l-2 border-[#a8a8a8]">
        <SidePanel />
        <div className="ml-[5px] w-[1628px] h-full border-t border-l border-[#a0a0a0] border-r border-r-[#f6f6f6]">
          <NetworkView />
        </div>
      </div>
      <div className="h-[6px] shrink-0 border-t border-white"></div>
      <Console />
      <StatusBar />
      <Taskbar />
    </div>
  )
}
